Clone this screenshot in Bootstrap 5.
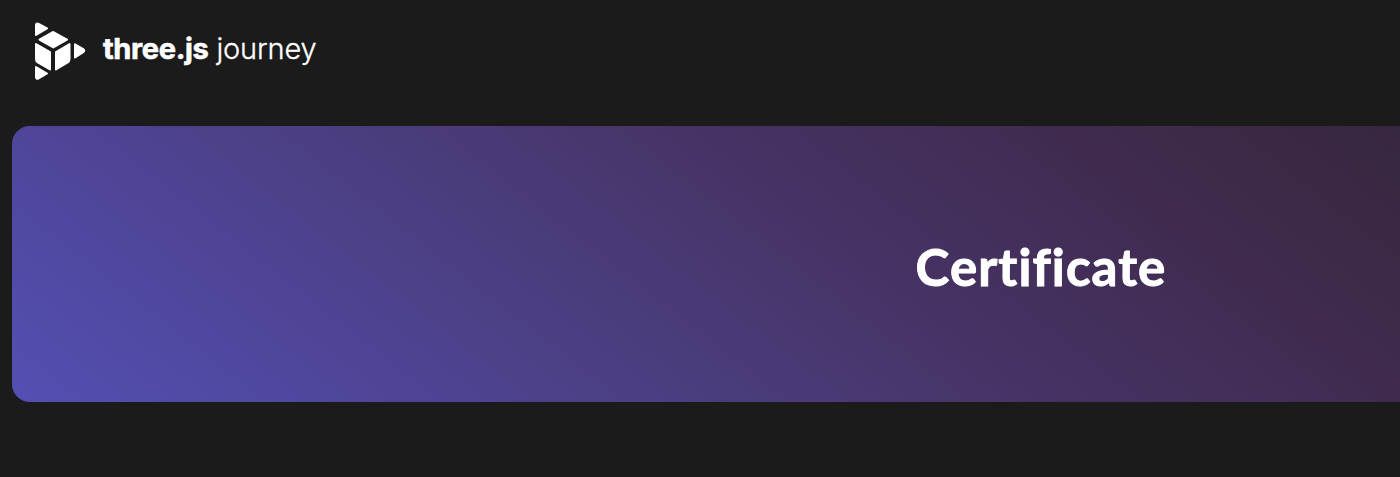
<!DOCTYPE html>
<html lang="en">
<head>
    <meta charset="UTF-8">
    <title>Certificate - Three.js Journey</title>
    <meta name="viewport" content="width=device-width, initial-scale=1">
    <link href="https://cdn.jsdelivr.net/npm/bootstrap@5.3.2/dist/css/bootstrap.min.css" rel="stylesheet">
    <style>
        body { background: #1b1b1b; color: #fff; font-family: Inter, "Liberation Sans", sans-serif; }
        .site-header { height: 126px; padding: 19px 0 0 32px; }
        .brand { height: 64px; color: #fff; }
        .brand-logo { width: 56px; height: 64px; }
        .brand-name { margin-left: 15px; font-size: 29px; line-height: 60px; height: 64px; white-space: nowrap; }
        .brand-name strong { font-weight: 700; letter-spacing: -0.35px; -webkit-text-stroke: 0.6px #fff; }
        .brand-name span { font-weight: 300; letter-spacing: -0.15px; margin-left: 8px; -webkit-text-stroke: 0.3px #fff; }
        .banner { width: 2058px; height: 276px; margin-left: 12px; border-radius: 18px; background: linear-gradient(38deg, #5350b3 0%, #4f469a 14.6%, #4b3d7e 28.7%, #463365 43.2%, #402b4f 57.7%, #37273e 72.2%, #28222a 100%); }
        .banner h1 { padding-top: 4px; font-family: Lato, sans-serif; font-size: 51px; font-weight: 700; line-height: 1; letter-spacing: 1.1px; -webkit-text-stroke: 1px #fff; }
    </style>
</head>
<body class="vh-100 overflow-hidden">
    <header class="site-header">
        <a href="#" class="brand d-inline-flex text-decoration-none">
            <svg class="brand-logo" viewBox="32 19 56 64" fill="currentColor" stroke="currentColor" stroke-width="2" stroke-linejoin="round" aria-hidden="true">
                <path d="M36 35V25.5Q36 22.6 38.6 24L47 28.5Z"/>
                <path d="M39.5 39.6L53.3 32L67 39.6L53.3 47.5Z"/>
                <path d="M36 44L50 52V69.4L37.8 62.5Q36 61.4 36 59Z"/>
                <path d="M56 52L69.5 44V59Q69.5 61.4 67.7 62.5L56 69.4Z"/>
                <path d="M75 44.3L83.2 49Q85.3 50.6 83.2 52.1L75 57.5Z"/>
                <path d="M36 67L47 73.5L38.6 78.3Q36 79.6 36 76.8Z"/>
            </svg>
            <div class="brand-name"><strong>three.js</strong><span>journey</span></div>
        </a>
    </header>

    <main class="overflow-hidden">
        <div class="banner d-flex align-items-center justify-content-center">
            <h1 class="mb-0">Certificate</h1>
        </div>
    </main>

    <script src="https://cdn.jsdelivr.net/npm/bootstrap@5.3.2/dist/js/bootstrap.bundle.min.js"></script>
</body>
</html>
